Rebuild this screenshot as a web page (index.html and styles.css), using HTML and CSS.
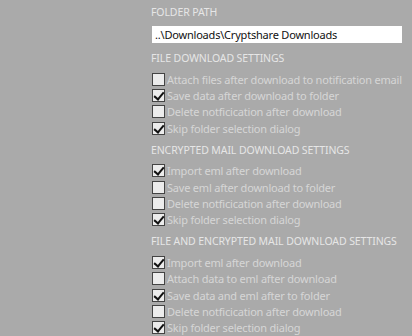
FILE: index.html
```html
<!DOCTYPE html>
<html lang="en">
<head>
  <meta charset="UTF-8">
  <title>Download settings</title>
  <link rel="stylesheet" href="styles.css">
</head>
<body>
  <div class="layout">
    <div class="sidebar"></div>
    <div class="panel">
      <div class="section folder">
        <h2>Folder Path</h2>
        <input class="path" type="text" value="..\Downloads\Cryptshare Downloads">
      </div>

      <div class="section">
        <h2>File Download Settings</h2>
        <label class="opt"><span class="box"></span>Attach files after download to notification email</label>
        <label class="opt"><span class="box on"></span>Save data after download to folder</label>
        <label class="opt"><span class="box"></span>Delete notficication after download</label>
        <label class="opt"><span class="box on"></span>Skip folder selection dialog</label>
      </div>

      <div class="section">
        <h2>Encrypted Mail Download Settings</h2>
        <label class="opt"><span class="box on"></span>Import eml after download</label>
        <label class="opt"><span class="box"></span>Save eml after download to folder</label>
        <label class="opt"><span class="box"></span>Delete notficication after download</label>
        <label class="opt"><span class="box on"></span>Skip folder selection dialog</label>
      </div>

      <div class="section">
        <h2>File and Encrypted Mail Download Settings</h2>
        <label class="opt"><span class="box on"></span>Import eml after download</label>
        <label class="opt"><span class="box"></span>Attach data to eml after download</label>
        <label class="opt"><span class="box on"></span>Save data and eml after to folder</label>
        <label class="opt"><span class="box"></span>Delete notficication after download</label>
        <label class="opt"><span class="box on"></span>Skip folder selection dialog</label>
      </div>
    </div>
  </div>
</body>
</html>
```

FILE: styles.css
```css
* { box-sizing: border-box; }
body {
  margin: 0;
  background: #aaaaaa;
  font-family: "Noto Sans", "Open Sans", sans-serif;
  font-size: 11px;
  letter-spacing: -0.2px;
  color: #d6d6d6;
}
.layout { display: grid; grid-template-columns: 151px 1fr; }
.panel { padding: 4px 12px 0 0; }
.section { display: flex; flex-direction: column; margin-bottom: 5px; }
.section.folder { margin-bottom: 7px; }
h2 {
  margin: 0 0 5px;
  font-size: 10.5px;
  font-weight: normal;
  letter-spacing: -0.1px;
  text-transform: uppercase;
  color: #e6e6e6;
  line-height: 16px;
  white-space: nowrap;
}
.path {
  margin: 1px 0 0 1px;
  height: 17px;
  border: none;
  padding: 0 3px;
  font: inherit;
  letter-spacing: -0.2px;
  color: #111;
  background: #fff;
}
.opt {
  display: flex;
  align-items: center;
  gap: 2px;
  height: 16.4px;
  padding-left: 1px;
  white-space: nowrap;
}
.box {
  width: 13px; height: 13px;
  border: 1px solid #444;
  background: #ececec;
  flex: none;
  position: relative;
}
.box.on::after {
  content: "";
  position: absolute;
  left: 3px; top: 0;
  width: 4px; height: 8px;
  border: solid #111;
  border-width: 0 2px 2px 0;
  transform: rotate(40deg);
}
```
